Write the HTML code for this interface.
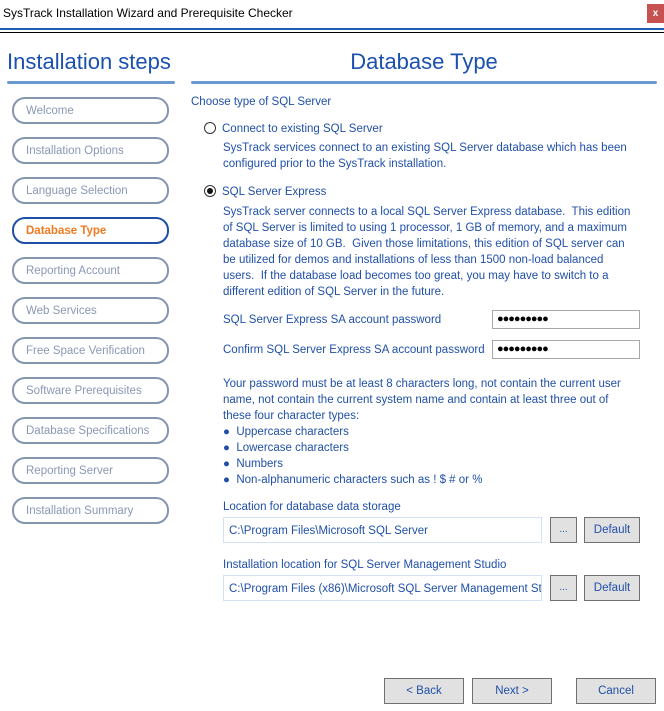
<!DOCTYPE html>
<html><head><meta charset="utf-8"><style>
body{margin:0;width:664px;height:711px;background:#fff;position:relative;overflow:hidden;font-family:"Liberation Sans",sans-serif;font-size:11.5px;color:#2050a8}
.a{position:absolute;white-space:nowrap;line-height:16px}
.pill{position:absolute;left:12px;width:153px;height:23px;border:2px solid #8595b0;border-radius:13px;color:#8a98b4;line-height:25px;text-indent:12px;font-size:11.5px}
.pill.act{border-color:#1e50a8;color:#f07a20;font-weight:bold}
.btn{position:absolute;background:#e1e1e1;border:1px solid #707070;box-sizing:border-box;text-align:center;color:#2050a8}
.inp{position:absolute;border:1px solid #d4e2f6;box-sizing:border-box;color:#2050a8;line-height:26px;padding-left:5px;white-space:nowrap;overflow:hidden}
.pw{position:absolute;left:492px;width:148px;height:19px;border:1px solid #a8a8a8;box-sizing:border-box;color:#000;font-size:11px;line-height:17px;padding-left:4px;letter-spacing:-1px}
.rad{position:absolute;left:204px;width:10px;height:10px;border:1px solid #333;border-radius:50%}
</style></head><body>
<div class="a" style="left:3px;top:5px;color:#000;font-size:12px">SysTrack Installation Wizard and Prerequisite Checker</div>
<div style="position:absolute;left:647px;top:4px;width:17px;height:19px;background:#c75050;color:#fff;font-size:10px;font-weight:bold;text-align:center;line-height:19px">x</div>
<div style="position:absolute;left:0;top:28px;width:664px;height:2px;background:#1e5cb0"></div>
<div style="position:absolute;left:0;top:32px;width:664px;height:1px;background:#000"></div>

<div class="a" style="left:7px;top:48px;font-size:22px;line-height:28px;color:#1a50b0">Installation steps</div>
<div style="position:absolute;left:7px;top:81px;width:168px;height:3px;background:#6c98d0;border-radius:2px"></div>
<div class="a" style="left:191px;top:48px;width:466px;text-align:center;font-size:22px;line-height:28px;color:#1a50b0">Database Type</div>
<div style="position:absolute;left:191px;top:81px;width:466px;height:3px;background:#6c98d0;border-radius:2px"></div>

<div class="pill" style="top:97px">Welcome</div>
<div class="pill" style="top:137px">Installation Options</div>
<div class="pill" style="top:177px">Language Selection</div>
<div class="pill act" style="top:217px">Database Type</div>
<div class="pill" style="top:257px">Reporting Account</div>
<div class="pill" style="top:297px">Web Services</div>
<div class="pill" style="top:337px">Free Space Verification</div>
<div class="pill" style="top:377px">Software Prerequisites</div>
<div class="pill" style="top:417px">Database Specifications</div>
<div class="pill" style="top:457px">Reporting Server</div>
<div class="pill" style="top:497px">Installation Summary</div>

<div class="a" style="left:191px;top:94px">Choose type of SQL Server</div>
<div class="rad" style="top:122px"></div>
<div class="a" style="left:222px;top:121px">Connect to existing SQL Server</div>
<div class="a" style="left:223px;top:140px">SysTrack services connect to an existing SQL Server database which has been<br>configured prior to the SysTrack installation.</div>
<div class="rad" style="top:185px"><div style="position:absolute;left:2px;top:2px;width:6px;height:6px;border-radius:50%;background:#111"></div></div>
<div class="a" style="left:222px;top:184px">SQL Server Express</div>
<div class="a" style="left:223px;top:204px">SysTrack server connects to a local SQL Server Express database.&nbsp; This edition<br>of SQL Server is limited to using 1 processor, 1 GB of memory, and a maximum<br>database size of 10 GB.&nbsp; Given those limitations, this edition of SQL server can<br>be utilized for demos and installations of less than 1500 non-load balanced<br>users.&nbsp; If the database load becomes too great, you may have to switch to a<br>different edition of SQL Server in the future.</div>

<div class="a" style="left:223px;top:312px">SQL Server Express SA account password</div>
<div class="pw" style="top:310px">●●●●●●●●●</div>
<div class="a" style="left:223px;top:342px">Confirm SQL Server Express SA account password</div>
<div class="pw" style="top:340px">●●●●●●●●●</div>

<div class="a" style="left:223px;top:376px">Your password must be at least 8 characters long, not contain the current user<br>name, not contain the current system name and contain at least three out of<br>these four character types:</div>
<div class="a" style="left:223px;top:424px">●&nbsp; Uppercase characters<br>●&nbsp; Lowercase characters<br>●&nbsp; Numbers<br>●&nbsp; Non-alphanumeric characters such as ! $ # or %</div>

<div class="a" style="left:223px;top:499px">Location for database data storage</div>
<div class="inp" style="left:223px;top:517px;width:319px;height:26px">C:\Program Files\Microsoft SQL Server</div>
<div class="btn" style="left:550px;top:517px;width:27px;height:26px;line-height:24px;font-size:10px">...</div>
<div class="btn" style="left:584px;top:517px;width:56px;height:26px;line-height:25px">Default</div>
<div class="a" style="left:223px;top:557px">Installation location for SQL Server Management Studio</div>
<div class="inp" style="left:223px;top:575px;width:319px;height:26px">C:\Program Files (x86)\Microsoft SQL Server Management Studio</div>
<div class="btn" style="left:550px;top:575px;width:27px;height:26px;line-height:24px;font-size:10px">...</div>
<div class="btn" style="left:584px;top:575px;width:56px;height:26px;line-height:25px">Default</div>

<div class="btn" style="left:384px;top:678px;width:80px;height:26px;line-height:25px">&lt; Back</div>
<div class="btn" style="left:472px;top:678px;width:80px;height:26px;line-height:25px">Next &gt;</div>
<div class="btn" style="left:576px;top:678px;width:80px;height:26px;line-height:25px">Cancel</div>
</body></html>
